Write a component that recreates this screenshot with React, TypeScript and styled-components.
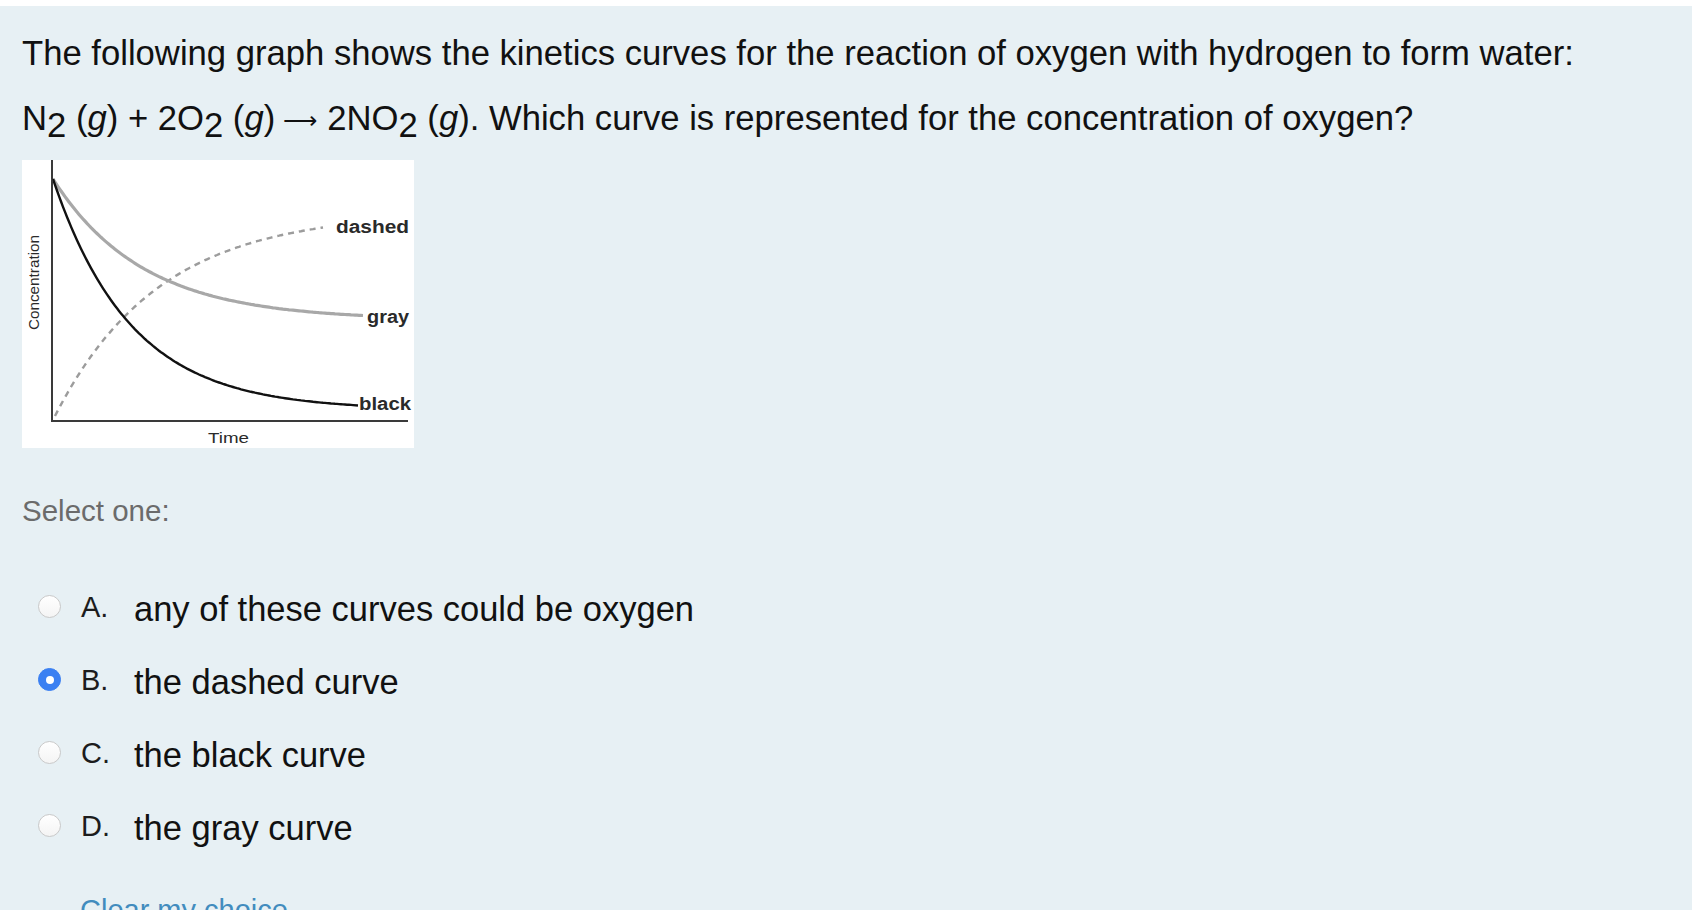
import React from "react";
import styled, { createGlobalStyle } from "styled-components";

const GlobalStyle = createGlobalStyle`
  html, body {
    margin: 0;
    padding: 0;
    background: #ffffff;
  }
  body {
    font-family: "Liberation Sans", Arial, Helvetica, sans-serif;
  }
`;

const Page = styled.div`
  margin-top: 6px;
  background: #e7f0f4;
  padding: 27px 0 0 22px;
  box-sizing: border-box;
  overflow: hidden;
  height: 904px;
`;

const QuestionLine = styled.p<{ $gap?: number }>`
  margin: 0 0 ${(p) => p.$gap ?? 0}px 0;
  font-size: 34.65px;
  line-height: 40px;
  color: #111111;
  white-space: nowrap;
`;

const Sub = styled.span`
  font-size: 1em;
  vertical-align: -7px;
  line-height: 0;
`;

const Arrow = styled.span`
  font-family: "DejaVu Sans", sans-serif;
  font-size: 24px;
  font-weight: 200;
  line-height: 0;
  margin: 0 10px 0 8px;
  vertical-align: 1px;
`;

const Figure = styled.div`
  width: 392px;
  height: 288px;
  background: #ffffff;
  margin-top: 22px;
`;

const Prompt = styled.div`
  margin-top: 45px;
  font-size: 29.5px;
  line-height: 36px;
  color: #6b6b6b;
`;

const Answers = styled.div`
  margin-top: 60px;
  display: flex;
  flex-direction: column;
`;

const Row = styled.label`
  display: flex;
  align-items: flex-start;
  height: 73px;
`;

const Radio = styled.span<{ $checked?: boolean }>`
  box-sizing: border-box;
  width: 23px;
  height: 23px;
  border-radius: 50%;
  margin: 6px 20px 0 16px;
  flex: none;
  background: ${(p) =>
    p.$checked ? "#3b80f2" : "linear-gradient(#ffffff, #f4f4f4)"};
  border: 1px solid ${(p) => (p.$checked ? "#3b80f2" : "#c9c9c9")};
  display: flex;
  align-items: center;
  justify-content: center;
  &::after {
    content: "";
    display: ${(p) => (p.$checked ? "block" : "none")};
    width: 8px;
    height: 8px;
    border-radius: 50%;
    background: #ffffff;
  }
`;

const Letter = styled.span`
  width: 53px;
  flex: none;
  font-size: 29px;
  line-height: 36px;
  color: #1c1c1c;
`;

const AnswerText = styled.span`
  font-size: 34.5px;
  line-height: 40px;
  color: #111111;
  white-space: nowrap;
`;

const ClearLink = styled.a`
  display: block;
  margin: 11px 0 0 58px;
  font-size: 29px;
  line-height: 36px;
  color: #428cbe;
  text-decoration: none;
`;

// Curve data for the kinetics graph (image-local coordinates)
const buildPath = (
  x0: number,
  x1: number,
  f: (xp: number) => number
): string => {
  const pts: string[] = [];
  for (let x = x0; x <= x1; x += 2) {
    pts.push(`${x.toFixed(1)},${f(x - x0).toFixed(1)}`);
  }
  return "M" + pts.join(" L");
};

const grayPath = buildPath(31, 341, (xp) => 160 - 141 * Math.exp(-xp / 90));
const blackPath = buildPath(31, 331, (xp) => 250 - 231 * Math.exp(-xp / 78));
const dashedPath = buildPath(33, 301, (xp) => 52 + 204 * Math.exp(-xp / 104));

const KineticsGraph: React.FC = () => (
  <svg width="392" height="288" viewBox="0 0 392 288">
    <line x1="30" y1="0" x2="30" y2="261" stroke="#3a3a3a" strokeWidth="2" />
    <line x1="29" y1="261" x2="386" y2="261" stroke="#3a3a3a" strokeWidth="2" />
    <path d={dashedPath} fill="none" stroke="#9c9c9c" strokeWidth="2.4" strokeDasharray="6 5" />
    <path d={grayPath} fill="none" stroke="#a8a8a8" strokeWidth="3.2" />
    <path d={blackPath + " L336,245.5"} fill="none" stroke="#111111" strokeWidth="2.4" />
    <g fontFamily="Liberation Sans, Arial, sans-serif" fill="#2a2a2a">
      <text x="314" y="72.5" fontSize="17.5" fontWeight="bold" textLength="73" lengthAdjust="spacingAndGlyphs">dashed</text>
      <text x="345" y="163" fontSize="17.5" fontWeight="bold" textLength="42" lengthAdjust="spacingAndGlyphs">gray</text>
      <text x="337" y="250" fontSize="17.5" fontWeight="bold" textLength="52" lengthAdjust="spacingAndGlyphs">black</text>
      <text x="186" y="283" fontSize="14" textLength="41" lengthAdjust="spacingAndGlyphs">Time</text>
      <text
        x="0"
        y="0"
        fontSize="14"
        textLength="95"
        lengthAdjust="spacingAndGlyphs"
        transform="translate(16.5,170) rotate(-90)"
      >
        Concentration
      </text>
    </g>
  </svg>
);

const options = [
  { key: "A.", text: "any of these curves could be oxygen", checked: false },
  { key: "B.", text: "the dashed curve", checked: true },
  { key: "C.", text: "the black curve", checked: false },
  { key: "D.", text: "the gray curve", checked: false },
];

export default function App() {
  return (
    <>
      <GlobalStyle />
      <Page>
        <QuestionLine $gap={25}>
          The following graph shows the kinetics curves for the reaction of oxygen with hydrogen to form water:
        </QuestionLine>
        <QuestionLine>
          N<Sub>2</Sub> (<i>g</i>) + 2O<Sub>2</Sub> (<i>g</i>)<Arrow>⟶</Arrow>2NO<Sub>2</Sub> (<i>g</i>). Which curve is
          represented for the concentration of oxygen?
        </QuestionLine>
        <Figure>
          <KineticsGraph />
        </Figure>
        <Prompt>Select one:</Prompt>
        <Answers>
          {options.map((o) => (
            <Row key={o.key}>
              <Radio $checked={o.checked} />
              <Letter>{o.key}</Letter>
              <AnswerText>{o.text}</AnswerText>
            </Row>
          ))}
        </Answers>
        <ClearLink href="#">Clear my choice</ClearLink>
      </Page>
    </>
  );
}
